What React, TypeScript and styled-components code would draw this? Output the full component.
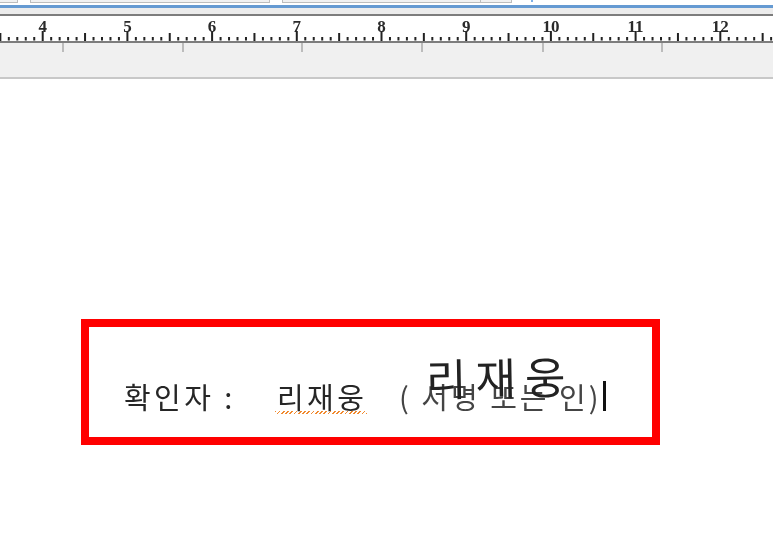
import styled, { createGlobalStyle } from "styled-components";

const GlobalStyle = createGlobalStyle`
  html, body {
    margin: 0;
    padding: 0;
    background: #fff;
  }
  body {
    width: 773px;
    height: 544px;
    overflow: hidden;
  }
`;

const Screen = styled.div`
  width: 773px;
  height: 544px;
  display: flex;
  flex-direction: column;
  background: #fff;
  filter: blur(0.4px);
  font-family: "Noto Sans CJK KR", "Noto Sans", sans-serif;
`;

const Toolbar = styled.div`
  height: 5px;
  display: flex;
  gap: 12px;
  align-items: flex-start;
  overflow: hidden;
`;

const Field = styled.div<{ $width: number; $open?: boolean }>`
  position: relative;
  width: ${(props) => props.$width}px;
  height: 3px;
  box-sizing: border-box;
  background: #f1f1f1;
  border-bottom: 1px solid #bdbdbd;
  border-right: 1px solid #bdbdbd;
  border-left: ${(props) => (props.$open ? "none" : "1px solid #bdbdbd")};
`;

const FieldButton = styled.div`
  position: absolute;
  top: 0;
  right: 0;
  bottom: 0;
  width: 30px;
  border-left: 1px solid #bdbdbd;
`;

const BlueMark = styled.div`
  width: 2px;
  height: 2px;
  margin-left: 7px;
  background: #7fb0e6;
`;

const BlueLine = styled.div`
  height: 3px;
  background: #659ad2;
`;

const ToolStrip = styled.div`
  height: 6px;
  background: #ececec;
  border-bottom: 2px solid #7d7d7d;
`;

const Ruler = styled.svg`
  display: block;
  width: 773px;
  height: 27px;
  flex: none;
`;

const RulerLabel = styled.text`
  font-family: "Liberation Serif", serif;
  font-size: 17px;
  font-weight: 700;
  fill: #2a2a2a;
  text-anchor: middle;
`;

const MarginStrip = styled.svg`
  display: block;
  width: 773px;
  height: 37px;
  flex: none;
`;

const Page = styled.div`
  flex: 1;
  background: #fff;
  padding: 239px 0 0 81px;
`;

const SignBox = styled.div`
  position: relative;
  width: 579px;
  height: 126px;
  box-sizing: border-box;
  border: 8px solid #ff0000;
  padding: 27px 0 0 35px;
  display: flex;
  align-items: center;
  font-size: 29px;
  line-height: 36px;
  color: #262626;
`;

const Label = styled.span`
  width: 153px;
  flex: none;
  white-space: pre;
  letter-spacing: 3.4px;
`;

const NameCell = styled.span`
  width: 122px;
  flex: none;
`;

const Name = styled.span`
  position: relative;
  display: inline-block;
  letter-spacing: 3.4px;

  &::after {
    content: "";
    position: absolute;
    left: -2px;
    right: 0;
    bottom: 0;
    height: 3px;
    background: repeating-linear-gradient(
      135deg,
      #f08a30 0 1.2px,
      transparent 1.2px 3px
    );
  }
`;

const Note = styled.span`
  flex: none;
  width: 204px;
  white-space: pre;
  color: #444;
  letter-spacing: 3px;
`;

const Caret = styled.span`
  width: 3px;
  height: 30px;
  background: #111;
  flex: none;
`;

const Signature = styled.span`
  position: absolute;
  left: 337px;
  top: 24px;
  font-size: 44px;
  line-height: 50px;
  letter-spacing: 9px;
  white-space: pre;
  color: #222;
  transform: rotate(-1deg);
`;

const TICK = 84.7;
const FIRST = 42.7;
const labels = [4, 5, 6, 7, 8, 9, 10, 11, 12];
const ticks = Array.from({ length: 100 }, (_, i) => i - 5);
const marginTicks = [63, 183, 302, 422, 543, 662];

export default function App() {
  return (
    <>
      <GlobalStyle />
      <Screen>
        <Toolbar>
          <Field $width={18} $open />
          <Field $width={240} />
          <Field $width={230}>
            <FieldButton />
          </Field>
          <BlueMark />
        </Toolbar>
        <BlueLine />
        <ToolStrip />
        <Ruler viewBox="0 0 773 27">
          {ticks.map((i) => {
            const x = FIRST + (i * TICK) / 10;
            const step = ((i % 10) + 10) % 10;
            if (step === 0) {
              return <rect key={i} x={x - 1} y={15} width={2} height={10} fill="#222" />;
            }
            if (step === 5) {
              return <rect key={i} x={x - 1} y={17} width={2} height={8} fill="#222" />;
            }
            return <rect key={i} x={x - 1} y={21} width={2} height={3.5} fill="#222" />;
          })}
          {labels.map((n, i) => (
            <RulerLabel key={n} x={FIRST + i * TICK} y={16}>
              {n}
            </RulerLabel>
          ))}
          <rect x={0} y={25} width={773} height={2} fill="#7d7d7d" />
        </Ruler>
        <MarginStrip viewBox="0 0 773 37">
          <rect x={0} y={0} width={773} height={35} fill="#f0f0f0" />
          <rect x={0} y={34} width={773} height={2} fill="#c8c8c8" />
          {marginTicks.map((x) => (
            <rect key={x} x={x - 1} y={0} width={2} height={9} fill="#bcbcbc" />
          ))}
        </MarginStrip>
        <Page>
          <SignBox>
            <Label>{"확인자 :"}</Label>
            <NameCell>
              <Name>리재웅</Name>
            </NameCell>
            <Note>{"( 서명 또는 인)"}</Note>
            <Caret />
            <Signature>리재웅</Signature>
          </SignBox>
        </Page>
      </Screen>
    </>
  );
}
